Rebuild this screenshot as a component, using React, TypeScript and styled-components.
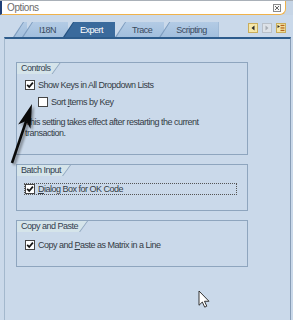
import React from "react";
import styled, { createGlobalStyle } from "styled-components";

const Global = createGlobalStyle`
  html, body { margin: 0; padding: 0; background: #cad9ea; }
  body { width: 293px; height: 320px; overflow: hidden; font-family: "Liberation Sans", Arial, sans-serif; }
`;

const Screen = styled.div`
  position: relative;
  width: 293px;
  height: 320px;
  display: flex;
  flex-direction: column;
  background: #cad9ea;
  overflow: hidden;
`;

const TitleBar = styled.div`
  height: 15px;
  box-sizing: border-box;
  border-top: 1px solid #a9b0b8;
  background: #c6d5e6;
  display: flex;
`;

const TitleField = styled.div`
  flex: 1;
  margin-right: 7px;
  box-sizing: border-box;
  display: flex;
  align-items: center;
  justify-content: space-between;
  background: #ffffff;
  border-left: 2px solid #1f3f78;
  border-bottom: 1px solid #f0b24a;
  border-right: 1px solid #f0b24a;
  border-bottom-right-radius: 6px;
  padding: 0 4px 0 5px;
`;

const TitleText = styled.span`
  font-size: 10px;
  letter-spacing: -0.4px;
  color: #6c6c6c;
`;

const CloseBox = styled.span`
  width: 8px;
  height: 8px;
  box-sizing: border-box;
  border: 1px solid #8a8a8a;
  background: #fafafa;
  display: flex;
  align-items: center;
  justify-content: center;
`;

const TabRow = styled.div`
  margin-top: 7px;
  height: 15px;
  display: flex;
  align-items: flex-start;
  padding: 0 7px 0 13px;
`;

const TabStrip = styled.div`
  display: flex;
  height: 15px;
`;

const Tab = styled.div<{ $active?: boolean; $gap?: number; $width?: number }>`
  position: relative;
  z-index: ${(p) => (p.$active ? 2 : 1)};
  height: 15px;
  margin-left: ${(p) => p.$gap ?? -5}px;
  ${(p) => (p.$width ? `width: ${p.$width}px;` : "")}
  display: flex;
  background: ${(p) => (p.$active ? "#23507e" : "#7e9dbf")};
  clip-path: polygon(10px 0, 100% 0, 100% 100%, 0 100%);
`;

const TabFace = styled.div<{ $active?: boolean }>`
  flex: 1;
  display: flex;
  align-items: center;
  padding: 0 12px 0 17px;
  font-size: 9px;
  letter-spacing: -0.5px;
  color: ${(p) => (p.$active ? "#ffffff" : "#3a4a5e")};
  background: ${(p) =>
    p.$active ? "#3a6a9c" : "linear-gradient(#b3cbe5, #a2bfdd)"};
  clip-path: polygon(11px 0, 100% 0, 100% 100%, 1.5px 100%);
`;

const NavGroup = styled.div`
  margin-left: auto;
  margin-top: 1px;
  display: flex;
  gap: 4px;
`;

const NavButton = styled.span<{ $off?: boolean }>`
  width: 10px;
  height: 10px;
  box-sizing: border-box;
  border: 1px solid ${(p) => (p.$off ? "#b9c0c8" : "#c9ad5c")};
  background: ${(p) => (p.$off ? "#dde2e8" : "#f6e7a8")};
  display: flex;
  align-items: center;
  justify-content: center;
`;

const Panel = styled.div`
  flex: 1;
  margin: 0 2px 0 4px;
  border-top: 2px solid #2d5c8c;
  border-left: 1px solid #a3b8cd;
  border-right: 1px solid #889db6;
  padding: 23px 0 0 11px;
  display: flex;
  flex-direction: column;
  gap: 9px;
`;

const Group = styled.div`
  width: 232px;
  box-sizing: border-box;
  border: 1px solid #8ea5be;
  display: flex;
  flex-direction: column;
`;

const GroupTitle = styled.div`
  align-self: flex-start;
  height: 11px;
  display: flex;
  background: #8ea5be;
  clip-path: polygon(0 0, 100% 0, calc(100% - 8px) 100%, 0 100%);
`;

const GroupTitleFace = styled.div`
  flex: 1;
  padding: 0 10px 0 4px;
  font-size: 9px;
  line-height: 11px;
  letter-spacing: -0.5px;
  color: #334050;
  background: #d5e4ea;
  clip-path: polygon(0 0, calc(100% - 1px) 0, calc(100% - 9px) 100%, 0 100%);
`;

const GroupBody = styled.div<{ $top: number }>`
  display: flex;
  flex-direction: column;
  padding: ${(p) => p.$top}px 10px 15px 8px;
`;

const Row = styled.div<{ $indent?: number; $focus?: boolean }>`
  height: 12px;
  box-sizing: border-box;
  display: flex;
  align-items: center;
  gap: 3px;
  margin-left: ${(p) => (p.$focus ? -1 : p.$indent ?? 0)}px;
  border: ${(p) => (p.$focus ? "1px dotted #555" : "none")};
  & + & {
    margin-top: 5px;
  }
`;

const Box = styled.span`
  width: 10px;
  height: 10px;
  flex: none;
  box-sizing: border-box;
  border: 1px solid #454545;
  background: #ffffff;
  display: flex;
  align-items: center;
  justify-content: center;
`;

const Label = styled.span`
  font-size: 9px;
  letter-spacing: -0.5px;
  color: #343b45;
  white-space: nowrap;
`;

const Key = styled.span`
  text-decoration: underline;
`;

const Hint = styled.p`
  margin: 9px 0 0 0;
  font-size: 9px;
  line-height: 11px;
  letter-spacing: -0.5px;
  color: #343b45;
`;

const Overlay = styled.svg`
  position: absolute;
  left: 0;
  top: 0;
  pointer-events: none;
`;

function Check({ on }: { on?: boolean }) {
  return (
    <Box>
      {on && (
        <svg width="8" height="8" viewBox="0 0 8 8">
          <path d="M1.2 3.9 L3.2 6 L6.9 1.6" fill="none" stroke="#111" strokeWidth="1.7" />
        </svg>
      )}
    </Box>
  );
}

const ARROW_LINE = "M12 163 L26.2 121";
const ARROW_HEAD = "M32 104 L30.5 128.8 L26.2 121 L18.1 124.6 Z";

export default function App() {
  return (
    <>
      <Global />
      <Screen>
        <TitleBar>
          <TitleField>
            <TitleText>Options</TitleText>
            <CloseBox>
              <svg width="6" height="6" viewBox="0 0 6 6">
                <path d="M1 1 L5 5 M5 1 L1 5" stroke="#666" strokeWidth="1" />
              </svg>
            </CloseBox>
          </TitleField>
        </TitleBar>

        <TabRow>
          <TabStrip>
            <Tab $gap={0} $width={14}>
              <TabFace />
            </Tab>
            <Tab>
              <TabFace>I18N</TabFace>
            </Tab>
            <Tab $active>
              <TabFace $active>Expert</TabFace>
            </Tab>
            <Tab $gap={0}>
              <TabFace>Trace</TabFace>
            </Tab>
            <Tab>
              <TabFace>Scripting</TabFace>
            </Tab>
          </TabStrip>
          <NavGroup>
            <NavButton>
              <svg width="6" height="6" viewBox="0 0 6 6">
                <path d="M4.5 0.5 L1.5 3 L4.5 5.5 Z" fill="#2a2a2a" />
              </svg>
            </NavButton>
            <NavButton $off>
              <svg width="6" height="6" viewBox="0 0 6 6">
                <path d="M1.5 0.5 L4.5 3 L1.5 5.5 Z" fill="#a8aeb5" />
              </svg>
            </NavButton>
            <NavButton>
              <svg width="8" height="8" viewBox="0 0 8 8">
                <path d="M0.5 1 L3 2.5 L0.5 4 Z" fill="#2a2a2a" />
                <rect x="3.5" y="0.8" width="4" height="1.3" fill="#b4651c" />
                <rect x="3.5" y="3.3" width="4" height="1.3" fill="#b4651c" />
                <rect x="3.5" y="5.8" width="4" height="1.3" fill="#b4651c" />
              </svg>
            </NavButton>
          </NavGroup>
        </TabRow>

        <Panel>
          <Group>
            <GroupTitle>
              <GroupTitleFace>Controls</GroupTitleFace>
            </GroupTitle>
            <GroupBody $top={5}>
              <Row>
                <Check on />
                <Label>Show Keys in All Dropdown Lists</Label>
              </Row>
              <Row $indent={13}>
                <Check />
                <Label>
                  Sort <Key>I</Key>tems by Key
                </Label>
              </Row>
              <Hint>
                This setting takes effect after restarting the current
                <br />
                transaction.
              </Hint>
            </GroupBody>
          </Group>

          <Group>
            <GroupTitle>
              <GroupTitleFace>Batch Input</GroupTitleFace>
            </GroupTitle>
            <GroupBody $top={7}>
              <Row $focus>
                <Check on />
                <Label>
                  <Key>D</Key>ialog Box for OK Code
                </Label>
              </Row>
            </GroupBody>
          </Group>

          <Group>
            <GroupTitle>
              <GroupTitleFace>Copy and Paste</GroupTitleFace>
            </GroupTitle>
            <GroupBody $top={7}>
              <Row>
                <Check on />
                <Label>
                  Copy and <Key>P</Key>aste as Matrix in a Line
                </Label>
              </Row>
            </GroupBody>
          </Group>
        </Panel>

        <Overlay width="293" height="320" viewBox="0 0 293 320">
          <defs>
            <filter id="soft" x="-50%" y="-50%" width="200%" height="200%">
              <feGaussianBlur stdDeviation="1.2" />
            </filter>
          </defs>
          <g transform="translate(2 2)" opacity="0.35" filter="url(#soft)">
            <path d={ARROW_LINE} stroke="#000" strokeWidth="3" />
            <path d={ARROW_HEAD} fill="#000" />
          </g>
          <path d={ARROW_LINE} stroke="#0a0a0a" strokeWidth="2.6" />
          <path d={ARROW_HEAD} fill="#0a0a0a" />

          <g transform="translate(199 291) scale(0.95)">
            <path
              d="M0 0 V15 L3.5 11.6 L6 17 L8.2 16 L5.8 10.8 H10.5 Z"
              fill="#ffffff"
              stroke="#2a2a2a"
              strokeWidth="1"
              strokeLinejoin="round"
            />
          </g>
        </Overlay>
      </Screen>
    </>
  );
}
